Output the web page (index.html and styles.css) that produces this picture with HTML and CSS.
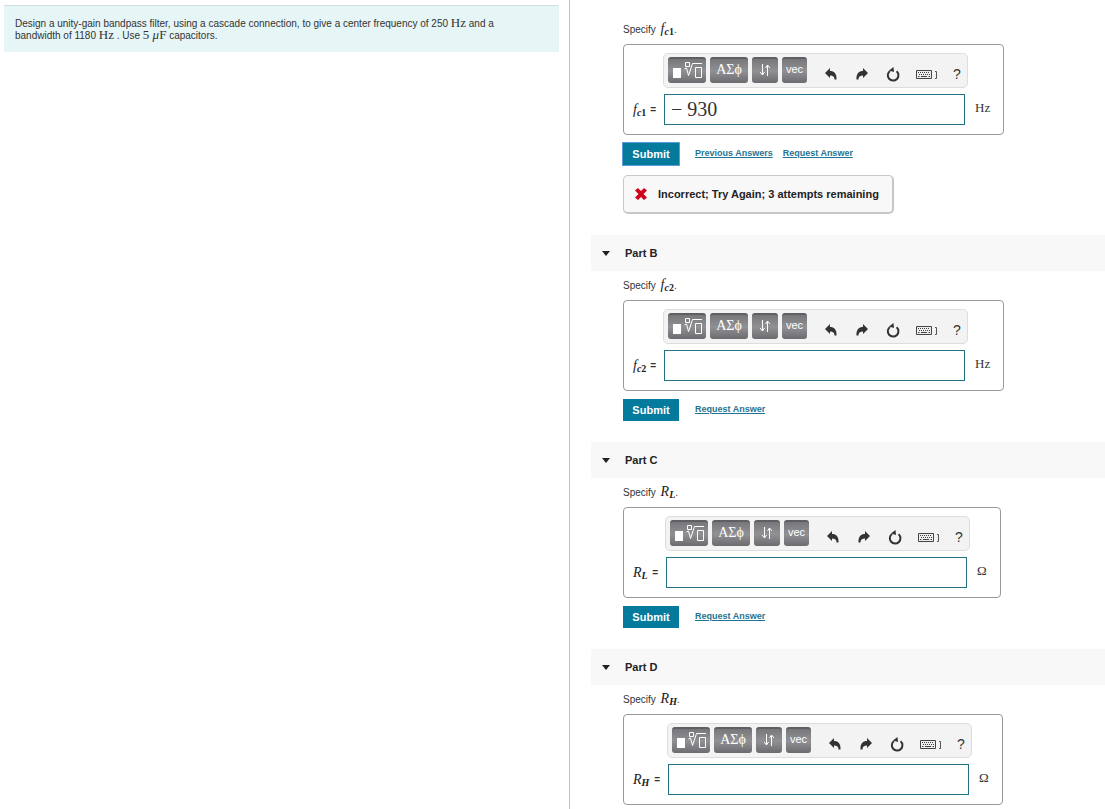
FILE: index.html
```html
<!DOCTYPE html>
<html lang="en">
<head>
<meta charset="utf-8">
<meta name="viewport" content="width=device-width, initial-scale=1">
<title>Bandpass filter problem</title>
<link rel="stylesheet" href="styles.css">
</head>
<body>
<svg class="sprite" aria-hidden="true">
  <symbol id="i-root" viewBox="0 0 30 20">
    <path d="M1 8h8v10H1z" fill="#fff"/>
    <path d="M13.500 2.500h4v4h-4zM12.500 9l2-1 2 7.500L20.500 3.500H30M23.500 7.500h6v10h-6z" fill="none" stroke="#fff"/>
  </symbol>
  <symbol id="i-arrows" viewBox="0 0 12 12">
    <path d="M3.500 0v10.500M1 8l2.500 3L5.500 8M8.500 12V1.500M6.500 4l2-3L11 4" fill="none" stroke="#fff"/>
  </symbol>
  <symbol id="i-undo" viewBox="0 0 12 12">
    <path d="M0 5L5 0v3c4 0 7 2.500 6.500 8.500h-2C9.500 8.500 8 7.500 5 7.500V10z" fill="#333"/>
  </symbol>
  <symbol id="i-redo" viewBox="0 0 12 12">
    <path d="M12 5L7 0v3C3 3 0 5.500.5 11.500h2c0-3 1.500-4 4.500-4V10z" fill="#333"/>
  </symbol>
  <symbol id="i-reset" viewBox="0 0 14 15">
    <path d="M4 4A5.300 5.300 0 1 0 10.500 4.200" fill="none" stroke="#333" stroke-width="2"/>
    <path d="M3 3.500L7.500 0 8 5z" fill="#333"/>
  </symbol>
  <symbol id="i-keyboard" viewBox="0 0 22 11">
    <path d="M.5 1.500h15v8H.5z" fill="#eee" stroke="#444"/>
    <path d="M2 3.500h12M3 5.500h11" fill="none" stroke="#444" stroke-dasharray="1 1"/>
    <path d="M2 7.500h1.500M5 7.500h6M12.500 7.500H14" fill="none" stroke="#444"/>
    <path d="M19 2.500h1.500v7H19" fill="none" stroke="#555"/>
  </symbol>
  <symbol id="i-cross" viewBox="0 0 12 12">
    <path d="M3 0l3 3 3-3 3 2.500L8.500 6 12 9.500 9 12 6 9l-3 3-3-2.500L3.500 6 0 2.500z" fill="#d0021b"/>
  </symbol>
</svg>

<div class="page">
  <section class="problem">
    <p class="statement">Design a unity-gain bandpass filter, using a cascade connection, to give a center frequency of 250 <span class="unit-text">Hz</span> and a bandwidth of 1180 <span class="unit-text">Hz</span> . Use <span class="unit-text">5 <i>μ</i>F</span> capacitors.</p>
  </section>

  <main class="parts">
    <section class="part">
      <div class="part-body">
        <p class="prompt">Specify <span class="math"><i>f</i><sub><i>c</i>1</sub></span>.</p>
        <div class="answer">
          <div class="toolbar" role="toolbar">
            <button class="tool wide" aria-label="Templates"><svg class="ic-root"><use href="#i-root"/></svg></button>
            <button class="tool wide greek">ΑΣϕ</button>
            <button class="tool" aria-label="Subscript and superscript"><svg class="ic-arrows"><use href="#i-arrows"/></svg></button>
            <button class="tool vec">vec</button>
            <span class="actions">
              <button class="action" aria-label="Undo"><svg class="ic-turn"><use href="#i-undo"/></svg></button>
              <button class="action" aria-label="Redo"><svg class="ic-turn"><use href="#i-redo"/></svg></button>
              <button class="action" aria-label="Reset"><svg class="ic-reset"><use href="#i-reset"/></svg></button>
              <button class="action" aria-label="Keyboard shortcuts"><svg class="ic-keyboard"><use href="#i-keyboard"/></svg></button>
              <button class="help">?</button>
            </span>
          </div>
          <label class="symbol" for="a"><span class="math"><i>f</i><sub><i>c</i>1</sub></span><span class="eq">=</span></label>
          <input class="field" id="a" type="text" value="− 930">
          <span class="unit">Hz</span>
        </div>
        <div class="submit-row">
          <button class="submit focused">Submit</button>
          <a class="link" href="#">Previous Answers</a>
          <a class="link" href="#">Request Answer</a>
        </div>
        <div class="feedback"><svg class="ic-cross"><use href="#i-cross"/></svg>Incorrect; Try Again; 3 attempts remaining</div>
      </div>
    </section>

    <section class="part">
      <h2 class="part-title"><button class="toggle">Part B</button></h2>
      <div class="part-body">
        <p class="prompt">Specify <span class="math"><i>f</i><sub><i>c</i>2</sub></span>.</p>
        <div class="answer">
          <div class="toolbar" role="toolbar">
            <button class="tool wide" aria-label="Templates"><svg class="ic-root"><use href="#i-root"/></svg></button>
            <button class="tool wide greek">ΑΣϕ</button>
            <button class="tool" aria-label="Subscript and superscript"><svg class="ic-arrows"><use href="#i-arrows"/></svg></button>
            <button class="tool vec">vec</button>
            <span class="actions">
              <button class="action" aria-label="Undo"><svg class="ic-turn"><use href="#i-undo"/></svg></button>
              <button class="action" aria-label="Redo"><svg class="ic-turn"><use href="#i-redo"/></svg></button>
              <button class="action" aria-label="Reset"><svg class="ic-reset"><use href="#i-reset"/></svg></button>
              <button class="action" aria-label="Keyboard shortcuts"><svg class="ic-keyboard"><use href="#i-keyboard"/></svg></button>
              <button class="help">?</button>
            </span>
          </div>
          <label class="symbol" for="b"><span class="math"><i>f</i><sub><i>c</i>2</sub></span><span class="eq">=</span></label>
          <input class="field" id="b" type="text">
          <span class="unit">Hz</span>
        </div>
        <div class="submit-row">
          <button class="submit">Submit</button>
          <a class="link" href="#">Request Answer</a>
        </div>
      </div>
    </section>

    <section class="part">
      <h2 class="part-title"><button class="toggle">Part C</button></h2>
      <div class="part-body">
        <p class="prompt">Specify <span class="math"><i>R</i><sub><i>L</i></sub></span>.</p>
        <div class="answer">
          <div class="toolbar" role="toolbar">
            <button class="tool wide" aria-label="Templates"><svg class="ic-root"><use href="#i-root"/></svg></button>
            <button class="tool wide greek">ΑΣϕ</button>
            <button class="tool" aria-label="Subscript and superscript"><svg class="ic-arrows"><use href="#i-arrows"/></svg></button>
            <button class="tool vec">vec</button>
            <span class="actions">
              <button class="action" aria-label="Undo"><svg class="ic-turn"><use href="#i-undo"/></svg></button>
              <button class="action" aria-label="Redo"><svg class="ic-turn"><use href="#i-redo"/></svg></button>
              <button class="action" aria-label="Reset"><svg class="ic-reset"><use href="#i-reset"/></svg></button>
              <button class="action" aria-label="Keyboard shortcuts"><svg class="ic-keyboard"><use href="#i-keyboard"/></svg></button>
              <button class="help">?</button>
            </span>
          </div>
          <label class="symbol symbol-l" for="c"><span class="math"><i>R</i><sub><i>L</i></sub></span><span class="eq">=</span></label>
          <input class="field" id="c" type="text">
          <span class="unit">Ω</span>
        </div>
        <div class="submit-row">
          <button class="submit">Submit</button>
          <a class="link" href="#">Request Answer</a>
        </div>
      </div>
    </section>

    <section class="part">
      <h2 class="part-title"><button class="toggle">Part D</button></h2>
      <div class="part-body">
        <p class="prompt">Specify <span class="math"><i>R</i><sub><i>H</i></sub></span>.</p>
        <div class="answer">
          <div class="toolbar" role="toolbar">
            <button class="tool wide" aria-label="Templates"><svg class="ic-root"><use href="#i-root"/></svg></button>
            <button class="tool wide greek">ΑΣϕ</button>
            <button class="tool" aria-label="Subscript and superscript"><svg class="ic-arrows"><use href="#i-arrows"/></svg></button>
            <button class="tool vec">vec</button>
            <span class="actions">
              <button class="action" aria-label="Undo"><svg class="ic-turn"><use href="#i-undo"/></svg></button>
              <button class="action" aria-label="Redo"><svg class="ic-turn"><use href="#i-redo"/></svg></button>
              <button class="action" aria-label="Reset"><svg class="ic-reset"><use href="#i-reset"/></svg></button>
              <button class="action" aria-label="Keyboard shortcuts"><svg class="ic-keyboard"><use href="#i-keyboard"/></svg></button>
              <button class="help">?</button>
            </span>
          </div>
          <label class="symbol symbol-h" for="d"><span class="math"><i>R</i><sub><i>H</i></sub></span><span class="eq">=</span></label>
          <input class="field" id="d" type="text">
          <span class="unit">Ω</span>
        </div>
      </div>
    </section>
  </main>
</div>
</body>
</html>
```
FILE: styles.css
```css
* { box-sizing: border-box; }

body {
  margin: 0;
  background: #fff;
  color: #333;
  font: 10px/12px "Liberation Sans", Arial, sans-serif;
}

p, h2 { margin: 0; }

button { margin: 0; padding: 0; border: 0; background: none; color: inherit; font: inherit; }

.sprite { display: none; }

.page {
  display: grid;
  grid-template-columns: minmax(0, 570fr) minmax(0, 535fr);
  min-height: 100vh;
}

/* Problem statement */
.problem {
  padding: 5px 10px 0 4px;
  border-right: 1px solid #b4c8d0;
}

.statement {
  padding: 12px 40px 10px 11px;
  border-top: 1px solid #cfdfe0;
  background: #e6f5f6;
}

.unit-text, .math, .unit { font-family: "Liberation Serif", "Times New Roman", serif; }

.unit-text { font-size: 13px; line-height: 8px; }

/* Answer parts */
.parts { padding: 15px 0 4px 21px; }

.part + .part { margin-top: 21px; }

.part-title {
  font-size: 11px;
  font-weight: bold;
  line-height: 14px;
  background: #f8f8f8;
}

.toggle {
  display: flex;
  align-items: center;
  gap: 15px;
  width: 100%;
  height: 36px;
  padding: 0 11px;
  color: #222;
}

.toggle::before {
  content: "";
  border: 4px solid transparent;
  border-top: 5px solid #222;
  border-bottom: 0;
}

.part-body { padding-left: 32px; }

.prompt { height: 29px; line-height: 29px; }
.prompt .math { margin-left: 2px; }

.math { color: #222; font-size: 14px; line-height: 16px; }
.math sub { font-size: 10px; line-height: 10px; vertical-align: -2px; font-weight: bold; }

.answer {
  display: inline-grid;
  grid-template-columns: auto 305px auto;
  align-items: center;
  row-gap: 6px;
  padding: 8px 13px 9px 9px;
  border: 1px solid #999;
  border-radius: 4px;
  vertical-align: top;
}

.toolbar {
  grid-column: 2;
  display: flex;
  align-items: flex-start;
  gap: 4px;
  height: 35px;
  padding: 3px 4px;
  border: 1px solid #ddd;
  border-radius: 5px;
  background: #f3f3f3;
}

.tool {
  display: flex;
  align-items: center;
  justify-content: center;
  width: 26px;
  height: 26px;
  border-top: 2px solid #5f5f63;
  border-radius: 3px;
  background: linear-gradient(#77777b, #919195 50%, #6c6c70);
  color: #fff;
  font: 14px/20px "Liberation Serif", "Times New Roman", serif;
}

.tool svg { margin-bottom: 2px; }

.wide { width: 38px; }

.greek { padding-bottom: 2px; }

.vec {
  width: 25px;
  padding-bottom: 4px;
  font: 11px/14px "Liberation Sans", Arial, sans-serif;
}

.actions {
  display: flex;
  align-items: center;
  gap: 15px;
  height: 34px;
  padding-left: 12px;
}

.action { display: flex; justify-content: center; min-width: 16px; }

.help { font: 14px/16px "Liberation Sans", Arial, sans-serif; }

.ic-root { width: 30px; height: 20px; }
.ic-arrows { width: 12px; height: 12px; }
.ic-turn { width: 12px; height: 12px; }
.ic-reset { width: 14px; height: 15px; }
.ic-keyboard { width: 22px; height: 11px; }
.ic-cross { width: 12px; height: 12px; }

.symbol {
  grid-column: 1;
  display: flex;
  align-items: center;
  justify-content: space-between;
  width: 30px;
  padding-right: 7px;
}

.symbol-l { width: 32px; }
.symbol-h { width: 34px; }

.eq { font-size: 10px; font-weight: bold; }

.field {
  width: 301px;
  height: 31px;
  margin: 0 0 0 1px;
  padding: 0 6px;
  border: 1px solid #1f7484;
  border-radius: 0;
  outline: 0;
  background: #fff;
  color: #333;
  font: 20px/24px "Liberation Serif", "Times New Roman", serif;
}

.unit { padding: 0 0 4px 7px; font-size: 13px; line-height: 16px; }

.submit-row {
  display: flex;
  align-items: center;
  gap: 10px;
  margin-top: 8px;
}

.submit {
  width: 56px;
  height: 22px;
  margin-right: 6px;
  background: #047a9c;
  color: #fff;
  font-size: 11px;
  font-weight: bold;
}

.focused { outline: 1px solid #5b9dd9; }

.link { padding-bottom: 2px; color: #1f7593; font-size: 9px; font-weight: bold; }

.feedback {
  display: inline-flex;
  align-items: center;
  gap: 11px;
  height: 39px;
  margin-top: 10px;
  padding: 0 13px 0 11px;
  border: 1px solid #c7c7c7;
  border-width: 1px 2px 2px 1px;
  border-radius: 5px;
  background: #f8f8f8;
  color: #222;
  font-size: 11px;
  font-weight: bold;
  vertical-align: top;
}
```
